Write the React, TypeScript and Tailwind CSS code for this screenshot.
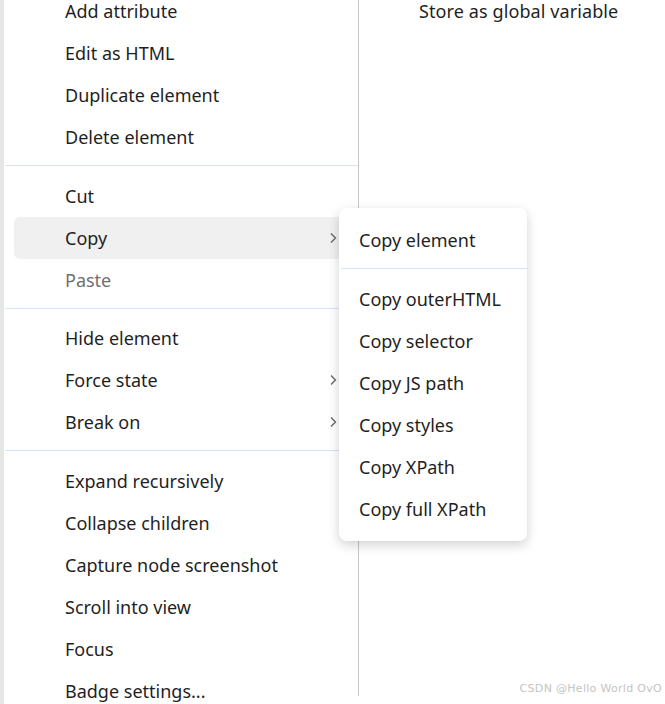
import React from "react";

const Chevron = () => (
  <svg width="8" height="12" viewBox="0 0 8 12" className="shrink-0">
    <path d="M2 1.5 L6.5 6 L2 10.5" fill="none" stroke="#5f6368" strokeWidth="1.3" />
  </svg>
);

type Item =
  | { label: string; sub?: boolean; active?: boolean; disabled?: boolean }
  | { sep: true; tight?: boolean };

const mainItems: Item[] = [
  { label: "Add attribute" },
  { label: "Edit as HTML" },
  { label: "Duplicate element" },
  { label: "Delete element" },
  { sep: true },
  { label: "Cut" },
  { label: "Copy", sub: true, active: true },
  { label: "Paste", disabled: true },
  { sep: true, tight: true },
  { label: "Hide element" },
  { label: "Force state", sub: true },
  { label: "Break on", sub: true },
  { sep: true },
  { label: "Expand recursively" },
  { label: "Collapse children" },
  { label: "Capture node screenshot" },
  { label: "Scroll into view" },
  { label: "Focus" },
  { label: "Badge settings..." },
];

const subItems: Item[] = [
  { label: "Copy element" },
  { sep: true },
  { label: "Copy outerHTML" },
  { label: "Copy selector" },
  { label: "Copy JS path" },
  { label: "Copy styles" },
  { label: "Copy XPath" },
  { label: "Copy full XPath" },
];

export default function App() {
  return (
    <div
      className="relative w-[665px] h-[704px] overflow-hidden bg-white flex text-[18px] text-[#1f1f1f]"
      style={{ fontFamily: '"Noto Sans", "Open Sans", sans-serif' }}
    >
      <div className="w-[4px] h-full bg-[#e6e6e6] shrink-0" />
      <div className="w-[354px] h-full shrink-0">
        <div className="-mt-[10px] flex flex-col">
          {mainItems.map((it, i) =>
            "sep" in it ? (
              <div
                key={i}
                className={`ml-[1px] mt-[7px] h-px bg-[#d3e3fd] ${it.tight ? "mb-[8px]" : "mb-[9px]"}`}
              />
            ) : (
              <div
                key={i}
                className={`mx-[10px] h-[42px] rounded-[6px] flex items-center justify-between pl-[51px] pr-[11px] ${
                  it.active ? "bg-[#f0f0f0]" : ""
                } ${it.disabled ? "text-[#6f6f6f]" : ""}`}
              >
                <span className="whitespace-nowrap">{it.label}</span>
                {it.sub ? <Chevron /> : null}
              </div>
            )
          )}
        </div>
      </div>
      <div className="w-px h-[696px] bg-[#c7c7c7] shrink-0" />
      <div className="flex-1">
        <div className="-mt-[10px] h-[42px] flex items-center pl-[60px] whitespace-nowrap tracking-[0.1px]">
          Store as global variable
        </div>
      </div>

      <div className="absolute left-[339px] top-[208px] w-[188px] py-[11px] bg-white rounded-[8px] shadow-[0_4px_12px_rgba(0,0,0,0.18)]">
        {subItems.map((it, i) =>
          "sep" in it ? (
            <div key={i} className="ml-[2px] mt-[7px] mb-[9px] h-px bg-[#d3e3fd]" />
          ) : (
            <div key={i} className="h-[42px] flex items-center pl-[20px] whitespace-nowrap">
              {it.label}
            </div>
          )
        )}
      </div>

      <div
        className="absolute right-[3px] bottom-[7px] text-[11px] text-[#c4c4c4] whitespace-nowrap tracking-[0.3px]"
        style={{ fontFamily: '"DejaVu Sans", sans-serif' }}
      >
        CSDN @Hello World OvO
      </div>
    </div>
  );
}
